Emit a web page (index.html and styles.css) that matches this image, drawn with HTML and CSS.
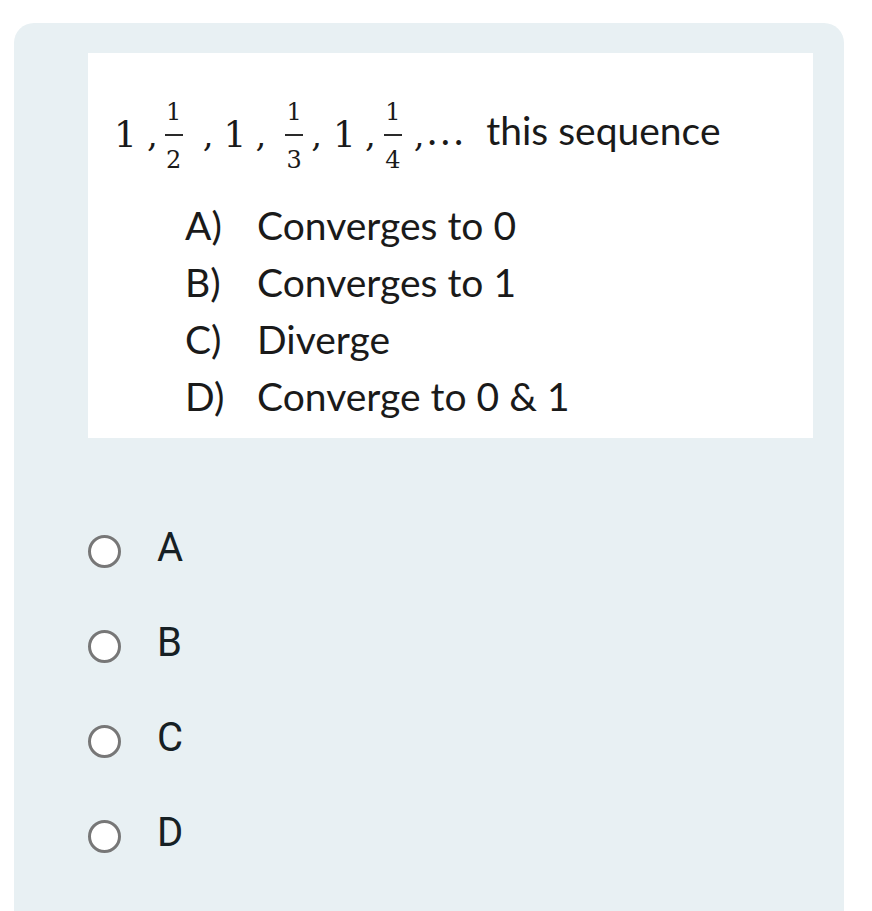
FILE: index.html
```html
<!DOCTYPE html>
<html>
<head>
<meta charset="utf-8">
<link rel="stylesheet" href="styles.css">
</head>
<body>
<div class="card">
  <div class="figure">
    <div class="seq"><span class="n">1</span><span class="c s10">,</span><span class="frac s7"><span class="num">1</span><span class="den">2</span></span><span class="c s20">,</span><span class="n s10">1</span><span class="c s9">,</span><span class="frac s19"><span class="num">1</span><span class="den">3</span></span><span class="c s8">,</span><span class="n s11">1</span><span class="c s9">,</span><span class="frac s8"><span class="num">1</span><span class="den">4</span></span><span class="c s12">,</span><span class="dots">...</span><span class="words">this sequence</span></div>
    <div class="choices">
      <div class="choice"><span class="key">A)</span><span>Converges to 0</span></div>
      <div class="choice"><span class="key">B)</span><span>Converges to 1</span></div>
      <div class="choice"><span class="key">C)</span><span>Diverge</span></div>
      <div class="choice"><span class="key">D)</span><span>Converge to 0 &amp; 1</span></div>
    </div>
  </div>
  <div class="options">
    <label class="option"><span class="radio"></span><span class="label">A</span></label>
    <label class="option"><span class="radio"></span><span class="label">B</span></label>
    <label class="option"><span class="radio"></span><span class="label">C</span></label>
    <label class="option"><span class="radio"></span><span class="label">D</span></label>
  </div>
</div>
</body>
</html>
```

FILE: styles.css
```css
html, body {
  margin: 0;
  padding: 0;
  background: #ffffff;
}
body {
  height: 911px;
  overflow: hidden;
}
.card {
  box-sizing: border-box;
  margin: 23px 0 0 14px;
  width: 830px;
  height: 888px;
  background: #e8f0f3;
  border-radius: 20px 20px 0 0;
  padding: 30px 31px 0 74px;
}
.figure {
  box-sizing: border-box;
  height: 385px;
  background: #ffffff;
  padding: 37px 0 0 26px;
  color: #1a1a1a;
}
.seq {
  white-space: nowrap;
  font-family: "DejaVu Serif", serif;
  font-size: 34px;
  line-height: 80px;
}
.seq .n, .seq .c {
  display: inline-block;
}
.seq .n {
  font-size: 36px;
}
.s7 { margin-left: 7px; }
.s8 { margin-left: 8px; }
.s9 { margin-left: 9px; }
.s10 { margin-left: 10px; }
.s11 { margin-left: 11px; }
.s12 { margin-left: 12px; }
.s19 { margin-left: 19px; }
.s20 { margin-left: 20px; }
.frac {
  display: inline-flex;
  flex-direction: column;
  align-items: center;
  width: 18px;
  font-size: 24px;
  line-height: 1;
  vertical-align: 27px;
}
.num {
  align-self: stretch;
  text-align: center;
  padding-bottom: 10px;
  border-bottom: 2px solid #2a2a2a;
}
.den {
  margin-top: 12px;
}
.dots {
  margin-left: 3px;
  font-family: "Lato", sans-serif;
  font-size: 39px;
  letter-spacing: 4px;
  vertical-align: 2px;
}
.words {
  margin-left: 19px;
  font-family: "Lato", sans-serif;
  font-size: 39px;
  vertical-align: 2px;
}
.choices {
  margin-top: 22px;
  padding-left: 71px;
  font-family: "Lato", sans-serif;
  font-size: 39px;
  line-height: 57px;
}
.choice {
  display: flex;
}
.key {
  width: 72px;
}
.options {
  display: flex;
  flex-direction: column;
  padding-top: 66px;
}
.option {
  display: flex;
  align-items: center;
  gap: 36px;
  height: 95px;
}
.radio {
  box-sizing: border-box;
  width: 33px;
  height: 33px;
  border: 3px solid #777777;
  border-radius: 50%;
  background: #ffffff;
}
.label {
  font-family: "Roboto", sans-serif;
  font-size: 40px;
  line-height: 48px;
  margin-bottom: 7px;
  color: #162024;
}
```
